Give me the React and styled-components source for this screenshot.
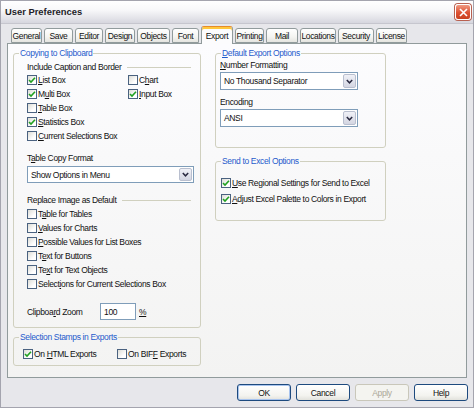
import React from 'react';
import styled, { createGlobalStyle } from 'styled-components';

const GlobalStyle = createGlobalStyle`
  html, body {
    margin: 0;
    padding: 0;
    background: #e7e7eb;
  }
  body {
    font-family: "Liberation Sans", Arial, sans-serif;
    font-size: 8.5px;
    letter-spacing: -0.35px;
    line-height: 10px;
    color: #111;
  }
  * {
    box-sizing: border-box;
  }
`;

const Window = styled.div`
  width: 474px;
  height: 408px;
  display: flex;
  flex-direction: column;
  background: #e7e7eb;
  border: 1px solid #a4a4ae;
  overflow: hidden;
`;

const TitleBar = styled.div`
  height: 23px;
  flex: none;
  display: flex;
  align-items: center;
  justify-content: space-between;
  padding: 0 2px 0 4px;
  background: linear-gradient(#ffffff, #f8f8fa 40%, #e2e2e8 80%, #d6d6de);
  border-bottom: 1px solid #c6c6ce;
`;

const Title = styled.span`
  font-size: 9.4px;
  letter-spacing: 0;
  font-weight: bold;
  color: #1e1e28;
`;

const CloseButton = styled.div`
  width: 16px;
  height: 16px;
  border-radius: 3px;
  border: 1px solid #fff;
  background: linear-gradient(#f09a82, #dd5032 55%, #c8401f);
  display: flex;
  align-items: center;
  justify-content: center;
  box-shadow: 0 0 0 1px #b86050;
`;

const Body = styled.div`
  flex: 1;
  display: flex;
  flex-direction: column;
  padding: 2px 6px 0 6px;
`;

const TabStrip = styled.div`
  height: 17px;
  display: flex;
  align-items: flex-end;
  gap: 2px;
  padding-left: 4px;
`;

const Tab = styled.div`
  position: relative;
  z-index: 1;
  width: ${p => p.$w}px;
  height: ${p => (p.$active ? 18 : 15)}px;
  margin-bottom: ${p => (p.$active ? -1 : 0)}px;
  display: flex;
  align-items: center;
  justify-content: center;
  padding-top: ${p => (p.$active ? 0 : 1)}px;
  border: 1px solid #919b9c;
  border-bottom: ${p => (p.$active ? 'none' : '1px solid #919b9c')};
  border-top-color: ${p => (p.$active ? '#e68b2c' : '#919b9c')};
  border-radius: 3px 3px 0 0;
  background: ${p =>
    p.$active ? '#fcfcfd' : 'linear-gradient(#ffffff, #f4f4f1 60%, #e5e5e0)'};
  box-shadow: ${p => (p.$active ? 'inset 0 2px 0 #ffc83c' : 'none')};
  white-space: nowrap;
`;

const Panel = styled.div`
  height: 335px;
  display: flex;
  gap: 14px;
  padding: 4px 5px;
  border: 1px solid #919b9c;
  background: linear-gradient(#fcfcfe, #f3f3f2);
`;

const Column = styled.div`
  width: ${p => p.$w}px;
  display: flex;
  flex-direction: column;
`;

const Group = styled.fieldset`
  margin: ${p => p.$mt || 0}px 0 0 0;
  padding: 0;
  min-width: 0;
  border: 1px solid #d0d0bf;
  border-radius: 3px;
`;

const Legend = styled.legend`
  margin-left: 5px;
  padding: 0 1px;
  line-height: 10px;
  color: #1f5bcc;
`;

const GroupContent = styled.div`
  display: flex;
  flex-direction: column;
  padding: 0 ${p => p.$pr || 0}px ${p => p.$pb || 0}px ${p => p.$pl || 0}px;
`;

const Heading = styled.div`
  margin-top: ${p => p.$mt || 0}px;
  margin-right: 3px;
  height: 10px;
  display: flex;
  align-items: center;
  gap: 6px;
  white-space: nowrap;

  &::after {
    content: '';
    flex: 1;
    height: 1px;
    background: #d0d0bf;
  }
`;

const FieldLabel = styled.div`
  margin-top: ${p => p.$mt || 0}px;
  height: 10px;
`;

const CheckColumns = styled.div`
  margin-top: ${p => p.$mt || 0}px;
  display: flex;
`;

const CheckList = styled.div`
  width: ${p => (p.$w ? `${p.$w}px` : 'auto')};
  margin-top: ${p => p.$mt || 0}px;
  display: flex;
  flex-direction: column;
`;

const CheckRow = styled.div`
  height: ${p => p.$h || 14}px;
  display: flex;
  align-items: center;
  gap: 1px;
  white-space: nowrap;
`;

const Box = styled.span`
  width: 10px;
  height: 10px;
  flex: none;
  display: flex;
  align-items: center;
  justify-content: center;
  border: 1px solid #4a6280;
  background: linear-gradient(135deg, #dcdcd6, #ffffff 70%);
`;

const Select = styled.div`
  margin-top: ${p => p.$mt || 0}px;
  width: ${p => p.$w}px;
  height: ${p => p.$h}px;
  display: flex;
  border: 1px solid #7f9db9;
  background: #fff;
`;

const SelectValue = styled.div`
  flex: 1;
  display: flex;
  align-items: center;
  padding-left: 3px;
  white-space: nowrap;
`;

const ArrowButton = styled.div`
  width: 13px;
  margin: 1px;
  display: flex;
  align-items: center;
  justify-content: center;
  border: 1px solid #b9bfcf;
  border-radius: 2px;
  background: linear-gradient(#f0f1f7, #d4d6e2);
`;

const ZoomRow = styled.div`
  margin-top: ${p => p.$mt || 0}px;
  height: 17px;
  display: flex;
  align-items: center;
`;

const ZoomLabel = styled.span`
  width: 73px;
`;

const ZoomInput = styled.div`
  width: 36px;
  height: 17px;
  display: flex;
  align-items: center;
  padding-left: 3px;
  border: 1px solid #7f9db9;
  background: #fff;
`;

const Percent = styled.span`
  margin-left: 3px;
  text-decoration: underline;
`;

const ButtonBar = styled.div`
  margin-top: 6px;
  display: flex;
  justify-content: flex-end;
  gap: 5px;
  margin-right: -1px;
`;

const Button = styled.div`
  width: 54px;
  height: 17px;
  display: flex;
  align-items: center;
  justify-content: center;
  border: 1px solid ${p => (p.$disabled ? '#c9c7ba' : '#1d4a7e')};
  border-radius: 3px;
  color: ${p => (p.$disabled ? '#aca899' : '#111')};
  background: ${p =>
    p.$disabled ? '#f4f4f0' : 'linear-gradient(#ffffff, #f3f3ef 70%, #e2e2dc)'};
  box-shadow: ${p => (p.$default ? 'inset 0 0 0 1px #a8c4ee' : 'none')};
`;

const U = styled.span`
  text-decoration: underline;
`;

const Mn = ({ text, at }) =>
  at == null ? (
    text
  ) : (
    <>
      {text.slice(0, at)}
      <U>{text[at]}</U>
      {text.slice(at + 1)}
    </>
  );

const Check = ({ label, at, checked, h }) => (
  <CheckRow $h={h}>
    <Box>
      {checked && (
        <svg width="8" height="8" viewBox="0 0 8 8">
          <path d="M1 4 L3 6 L7 1.8" fill="none" stroke="#21a121" strokeWidth="1.6" />
        </svg>
      )}
    </Box>
    <span>
      <Mn text={label} at={at} />
    </span>
  </CheckRow>
);

const Arrow = () => (
  <svg width="7" height="5" viewBox="0 0 7 5">
    <path d="M0.8 1 L3.5 3.8 L6.2 1" fill="none" stroke="#2a2a40" strokeWidth="1.5" />
  </svg>
);

const tabs = [
  ['General', 31],
  ['Save', 29],
  ['Editor', 28],
  ['Design', 30],
  ['Objects', 33],
  ['Font', 27],
  ['Export', 32],
  ['Printing', 29],
  ['Mail', 32],
  ['Locations', 36],
  ['Security', 36],
  ['License', 31],
];

export default function App() {
  return (
    <>
      <GlobalStyle />
      <Window>
        <TitleBar>
          <Title>User Preferences</Title>
          <CloseButton>
            <svg width="9" height="9" viewBox="0 0 9 9">
              <path d="M1 1 L8 8 M8 1 L1 8" stroke="#fff" strokeWidth="1.6" />
            </svg>
          </CloseButton>
        </TitleBar>
        <Body>
          <TabStrip>
            {tabs.map(([name, w]) => (
              <Tab key={name} $w={w} $active={name === 'Export'}>
                {name}
              </Tab>
            ))}
          </TabStrip>
          <Panel>
            <Column $w={188}>
              <Group>
                <Legend>Copying to Clipboard</Legend>
                <GroupContent $pl={13} $pr={6} $pb={7}>
                  <Heading $mt={4}>Include Caption and Border</Heading>
                  <CheckColumns $mt={1}>
                    <CheckList $w={101}>
                      <Check label="List Box" at={0} checked />
                      <Check label="Multi Box" at={1} checked />
                      <Check label="Table Box" at={0} />
                      <Check label="Statistics Box" at={0} checked />
                      <Check label="Current Selections Box" at={0} />
                    </CheckList>
                    <CheckList>
                      <Check label="Chart" at={1} />
                      <Check label="Input Box" at={0} checked />
                    </CheckList>
                  </CheckColumns>
                  <FieldLabel $mt={10}>
                    <Mn text="Table Copy Format" at={1} />
                  </FieldLabel>
                  <Select $mt={3} $w={167} $h={17}>
                    <SelectValue>Show Options in Menu</SelectValue>
                    <ArrowButton>
                      <Arrow />
                    </ArrowButton>
                  </Select>
                  <Heading $mt={12}>Replace Image as Default</Heading>
                  <CheckList $mt={2}>
                    <Check label="Table for Tables" at={1} />
                    <Check label="Values for Charts" at={0} />
                    <Check label="Possible Values for List Boxes" at={0} />
                    <Check label="Text for Buttons" at={1} />
                    <Check label="Text for Text Objects" at={2} />
                    <Check label="Selections for Current Selections Box" at={6} />
                  </CheckList>
                  <ZoomRow $mt={12}>
                    <ZoomLabel>
                      <Mn text="Clipboard Zoom" at={7} />
                    </ZoomLabel>
                    <ZoomInput>100</ZoomInput>
                    <Percent>%</Percent>
                  </ZoomRow>
                </GroupContent>
              </Group>
              <Group $mt={4}>
                <Legend>Selection Stamps in Exports</Legend>
                <GroupContent $pl={9} $pb={4}>
                  <CheckColumns $mt={5}>
                    <CheckList $w={94}>
                      <Check label="On HTML Exports" at={3} checked />
                    </CheckList>
                    <CheckList>
                      <Check label="On BIFF Exports" at={6} />
                    </CheckList>
                  </CheckColumns>
                </GroupContent>
              </Group>
            </Column>
            <Column $w={171}>
              <Group>
                <Legend>
                  <Mn text="Default Export Options" at={0} />
                </Legend>
                <GroupContent $pl={4} $pb={20}>
                  <FieldLabel $mt={2}>
                    <Mn text="Number Formatting" at={0} />
                  </FieldLabel>
                  <Select $mt={2} $w={138} $h={18}>
                    <SelectValue>No Thousand Separator</SelectValue>
                    <ArrowButton>
                      <Arrow />
                    </ArrowButton>
                  </Select>
                  <FieldLabel $mt={7}>Encoding</FieldLabel>
                  <Select $mt={2} $w={138} $h={18}>
                    <SelectValue>ANSI</SelectValue>
                    <ArrowButton>
                      <Arrow />
                    </ArrowButton>
                  </Select>
                </GroupContent>
              </Group>
              <Group $mt={8}>
                <Legend>Send to Excel Options</Legend>
                <GroupContent $pl={5} $pb={13}>
                  <CheckList $mt={9}>
                    <Check label="Use Regional Settings for Send to Excel" at={0} checked h={16} />
                    <Check label="Adjust Excel Palette to Colors in Export" at={0} checked h={16} />
                  </CheckList>
                </GroupContent>
              </Group>
            </Column>
          </Panel>
          <ButtonBar>
            <Button $default>OK</Button>
            <Button>Cancel</Button>
            <Button $disabled>Apply</Button>
            <Button>Help</Button>
          </ButtonBar>
        </Body>
      </Window>
    </>
  );
}
